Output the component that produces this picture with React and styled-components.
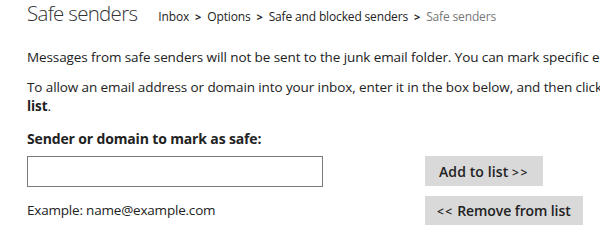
import React from 'react'
import styled, { createGlobalStyle } from 'styled-components'

const Global = createGlobalStyle`
  html, body {
    margin: 0;
    padding: 0;
    background: #fff;
    overflow: hidden;
  }
  body {
    font-family: 'Open Sans', 'Noto Sans', sans-serif;
    color: #222;
  }
`

const Page = styled.div`
  width: 600px;
  height: 245px;
  padding: 0 0 0 27px;
  box-sizing: border-box;
  overflow: hidden;
  white-space: nowrap;
`

const Header = styled.div`
  display: flex;
  align-items: baseline;
  gap: 21px;
  height: 31px;
  margin-top: -2px;
`

const Title = styled.h1`
  margin: 0;
  font-size: 20.5px;
  font-weight: 300;
  color: #333;
  letter-spacing: -0.7px;
  line-height: 30px;
`

const Crumbs = styled.nav`
  display: flex;
  align-items: baseline;
  gap: 6px;
  font-size: 12px;
  color: #222;
  letter-spacing: -0.15px;
`

const Crumb = styled.span`
  color: ${(p) => (p.$current ? '#777' : '#222')};
`

const Sep = styled.span`
  font-weight: 700;
  font-size: 11px;
`

const Text = styled.p`
  margin: ${(p) => p.$top || '0'} 0 0;
  font-size: 13.5px;
  line-height: 19px;
  letter-spacing: -0.1px;
  white-space: ${(p) => (p.$wrap ? 'normal' : 'nowrap')};
  width: ${(p) => (p.$wrap ? '640px' : 'auto')};
`

const Label = styled.div`
  margin-top: 13px;
  font-size: 14px;
  font-weight: 700;
  letter-spacing: -0.15px;
  line-height: 19px;
`

const Form = styled.div`
  display: grid;
  grid-template-columns: 296px auto;
  column-gap: 102px;
  margin-top: 8px;
`

const Left = styled.div`
  display: flex;
  flex-direction: column;
`

const Input = styled.input`
  width: 296px;
  height: 31px;
  box-sizing: border-box;
  border: 1px solid #7a7a7a;
  padding: 0 6px;
  font: inherit;
  outline: none;
`

const Hint = styled.div`
  margin-top: 14px;
  font-size: 13.5px;
  letter-spacing: -0.2px;
  line-height: 18px;
`

const Buttons = styled.div`
  display: flex;
  flex-direction: column;
  align-items: flex-start;
  gap: 10px;
`

const Button = styled.button`
  height: ${(p) => p.$h || '30px'};
  padding: 0 ${(p) => p.$pad || '14px'};
  border: none;
  background: #d9d9d9;
  color: #222;
  font-family: 'Open Sans', 'Noto Sans', sans-serif;
  font-size: 14px;
  font-weight: 600;
  letter-spacing: ${(p) => p.$ls || '0.1px'};
  cursor: pointer;
`

const Arrows = styled.span`
  letter-spacing: 1.5px;
  font-size: 12px;
`

export default function App() {
  return (
    <>
      <Global />
      <Page>
        <Header>
          <Title>Safe senders</Title>
          <Crumbs>
            <Crumb>Inbox</Crumb>
            <Sep>&gt;</Sep>
            <Crumb>Options</Crumb>
            <Sep>&gt;</Sep>
            <Crumb>Safe and blocked senders</Crumb>
            <Sep>&gt;</Sep>
            <Crumb $current>Safe senders</Crumb>
          </Crumbs>
        </Header>
        <Text $top="19px">
          Messages from safe senders will not be sent to the junk email folder. You can mark specific email addresses or domains as safe.
        </Text>
        <Text $top="11px" $wrap>
          To allow an email address or domain into your inbox, enter it in the box below, and then click <b>Add to list</b>.
        </Text>
        <Label>Sender or domain to mark as safe:</Label>
        <Form>
          <Left>
            <Input type="text" aria-label="Sender or domain" />
            <Hint>Example: name@example.com</Hint>
          </Left>
          <Buttons>
            <Button>Add to list <Arrows>&gt;&gt;</Arrows></Button>
            <Button $h="29px" $pad="12px" $ls="-0.1px"><Arrows>&lt;&lt;</Arrows> Remove from list</Button>
          </Buttons>
        </Form>
      </Page>
    </>
  )
}
